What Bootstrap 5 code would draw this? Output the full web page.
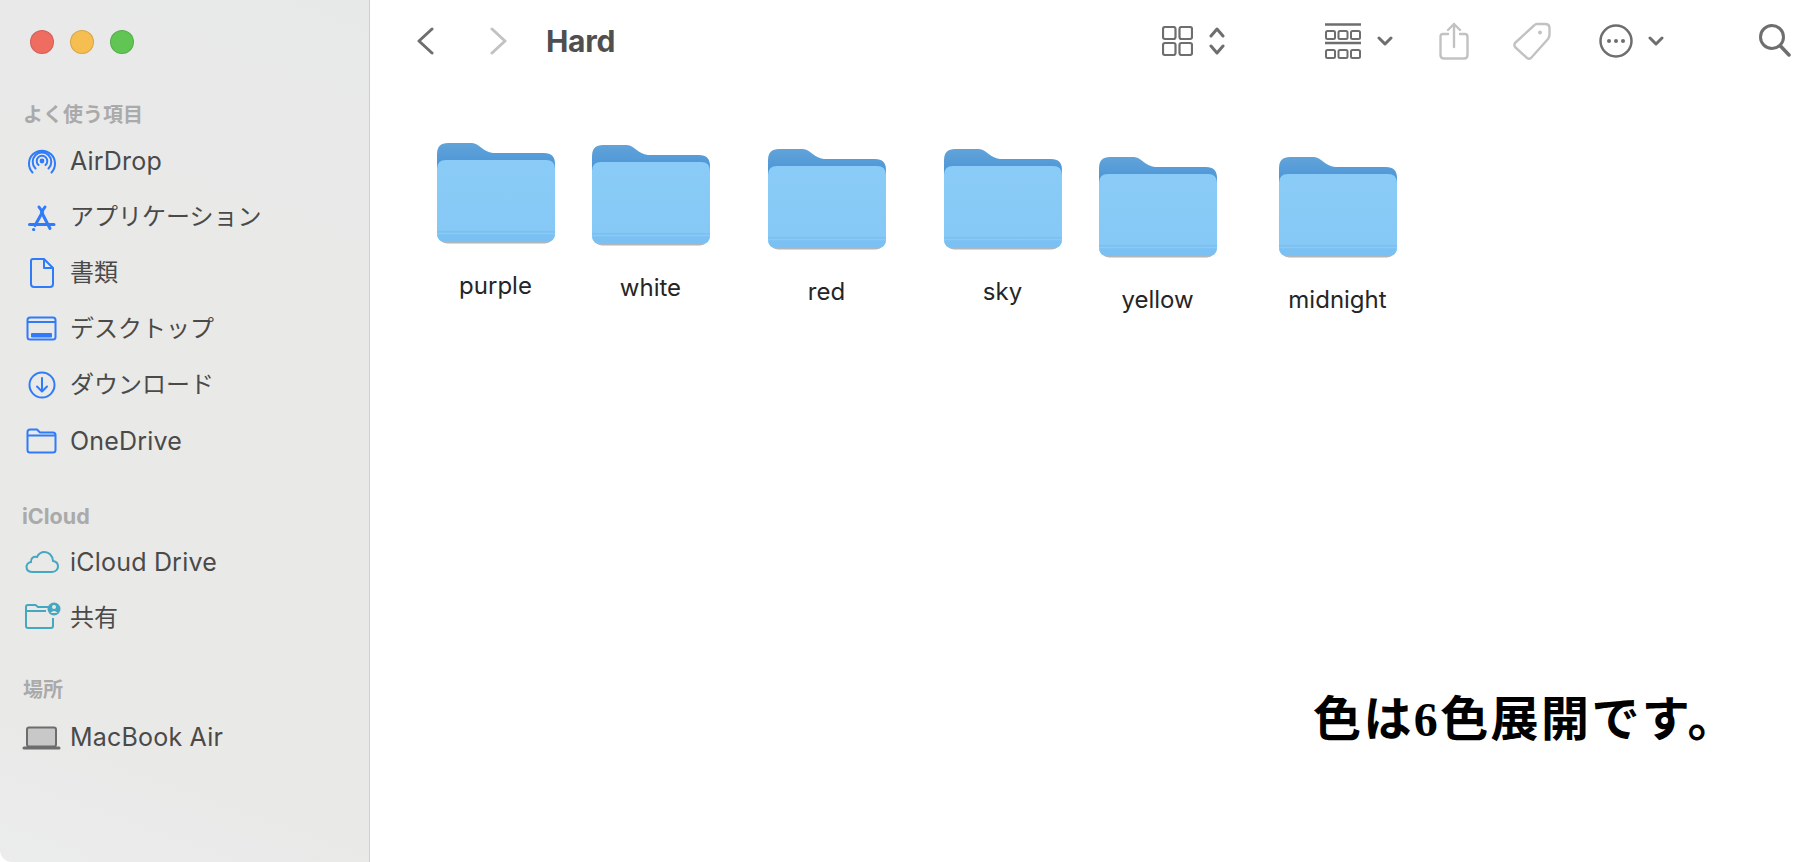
<!DOCTYPE html>
<html lang="ja">
<head>
<meta charset="utf-8">
<title>Hard</title>
<link href="https://cdn.jsdelivr.net/npm/bootstrap@5.3.0/dist/css/bootstrap.min.css" rel="stylesheet">
<style>
html,body{height:100%;margin:0;overflow:hidden;background:#fff}
body{font-family:Inter,"Noto Sans CJK JP","Noto Sans",sans-serif}
.win{width:1820px;height:862px;overflow:hidden;position:relative}
.side{width:370px;height:862px;flex:none;background:linear-gradient(200deg,#e7e9e9 0%,#e9e9e8 25%,#e9e9e8 85%,#ebecec 100%);border-right:1px solid #cfcfcf;border-bottom-left-radius:12px;padding-top:30px}
.lights{height:24px;padding-left:30px;gap:16px}
.dot{width:24px;height:24px;border-radius:50%;border:1px solid rgba(0,0,0,.13)}
.d-red{background:#ef6c60}.d-yel{background:#f6bd50}.d-grn{background:#61c554}
.sec{height:28px;line-height:28px;font-size:20px;font-weight:700;color:#aaa;padding-left:23px;margin-bottom:5px}
.sec-lat{font-size:21.500px;padding-left:22px}
.sec-a{margin-top:47px;margin-bottom:4px}.sec-b{margin-top:33px;margin-bottom:4px}.sec-c{margin-top:30px}
.row-side{height:56px;font-size:24px;color:#4a4a4a}
.lat{font-size:25px;letter-spacing:.2px;padding-top:1px}
.ico-side{width:44px;height:40px;margin-left:20px;margin-right:6px;flex:none}
.main-pane{min-width:0}
.bar{height:81px;padding-left:47px}
.bar svg{flex:none;display:block}
.ttl{font-size:30px;font-weight:700;color:#4f4f4f;line-height:1;margin-left:39px;margin-right:auto;letter-spacing:-.3px;padding-top:1px}
.ml-fwd{margin-left:56px}
.ml-upd{margin-left:16px}.ml-grp{margin-left:100px}.ml-chev{margin-left:16px}.ml-chev2{margin-left:15px}
.ml-shr{margin-left:46px}.ml-tag{margin-left:44px}.ml-more{margin-left:48px}
.ml-srch{margin-left:95px;margin-right:29px}
.canvas{position:absolute;left:370px;top:0;right:0;bottom:0;pointer-events:none}
.fitem{position:absolute;width:118px;display:flex;flex-direction:column;align-items:center}
.fitem svg{display:block;flex:none;overflow:visible}
.fname{font-size:24px;line-height:28px;color:#252525;margin-top:28px;white-space:nowrap;margin-left:-1px}
.f1{left:67px;top:143px}.f2{left:222px;top:145px}.f3{left:398px;top:149px}
.f4{left:574px;top:149px}.f5{left:729px;top:157px}.f6{left:909px;top:157px}
.note{position:absolute;left:943px;top:688px;font-family:"Liberation Serif","Noto Sans CJK JP",serif;font-weight:700;font-size:48px;line-height:64px;color:#000;white-space:nowrap;letter-spacing:2.400px}
</style>
</head>
<body>
<svg width="0" height="0" class="position-absolute">
<defs>
<linearGradient id="gb" x1="0" y1="0" x2="0" y2="1"><stop offset="0" stop-color="#62a3d9"/><stop offset="1" stop-color="#3b8cd6"/></linearGradient>
<linearGradient id="gf" x1="0" y1="0" x2="0" y2="1"><stop offset="0" stop-color="#8accf7"/><stop offset="1" stop-color="#85c8f6"/></linearGradient>
<symbol id="fold" viewBox="0 0 118 101">
<rect x="1" y="60" width="116" height="40.500" rx="9" fill="#7c8790" opacity=".6"/>
<path d="M0 11Q0 0 11 0H35C42 0 46 9 56 10H107Q118 10 118 21V40H0Z" fill="url(#gb)"/>
<path d="M0 26Q0 17 9 17H109Q118 17 118 26V90Q118 99 109 99H9Q0 99 0 90Z" fill="url(#gf)"/>
<path d="M0 88H118V90Q118 99 109 99H9Q0 99 0 90Z" fill="#7bc0f2"/>
<path d="M0 90.500H118" stroke="#8ccaf5" stroke-width="1.500"/>
</symbol>
</defs>
</svg>
<div class="win d-flex">
  <aside class="side">
    <div class="lights d-flex"><span class="dot d-red"></span><span class="dot d-yel"></span><span class="dot d-grn"></span></div>
    <div class="sec sec-a">よく使う項目</div>
    <div class="row-side d-flex align-items-center">
      <svg class="ico-side" viewBox="0 0 44 40" fill="none" stroke="#2f7bfa" stroke-width="2" stroke-linecap="round"><circle cx="22" cy="20" r="2.400" fill="#2f7bfa" stroke="none"/><path d="M18.500 24A5.300 5.300 0 1 1 25.500 24M15.500 27.500A9.300 9.300 0 1 1 28.500 27.500M12.500 31.500A13 13 0 1 1 31.500 31.500"/></svg>
      <span class="lat">AirDrop</span>
    </div>
    <div class="row-side d-flex align-items-center">
      <svg class="ico-side" viewBox="0 0 44 40" fill="none" stroke="#2f7bfa" stroke-width="3" stroke-linecap="round"><path d="M19 10L22.500 15L15 28.500M25 10L21.500 15L30 31.500M9.500 27.500H34M13.500 32.500H13.800"/></svg>
      <span>アプリケーション</span>
    </div>
    <div class="row-side d-flex align-items-center">
      <svg class="ico-side" viewBox="0 0 44 40" fill="none" stroke="#2f7bfa" stroke-width="2" stroke-linejoin="round"><path d="M13 6H24L33 15V31Q33 34 30 34H14Q11 34 11 31V8Q11 6 13 6ZM24 6V15H33"/></svg>
      <span>書類</span>
    </div>
    <div class="row-side d-flex align-items-center">
      <svg class="ico-side" viewBox="0 0 44 40" fill="none" stroke="#2f7bfa" stroke-width="2"><rect x="7.500" y="8.500" width="28" height="22" rx="2.500"/><path d="M7.500 13H35.500"/><rect x="11" y="24" width="21" height="4.500" rx="1" fill="#2f7bfa" stroke="none"/></svg>
      <span>デスクトップ</span>
    </div>
    <div class="row-side d-flex align-items-center">
      <svg class="ico-side" viewBox="0 0 44 40" fill="none" stroke="#2f7bfa" stroke-width="2" stroke-linecap="round" stroke-linejoin="round"><circle cx="22" cy="20" r="12.500"/><path d="M22 13V26M17 21.500L22 26.500L27 21.500"/></svg>
      <span>ダウンロード</span>
    </div>
    <div class="row-side d-flex align-items-center">
      <svg class="ico-side" viewBox="0 0 44 40" fill="none" stroke="#2f7bfa" stroke-width="2" stroke-linejoin="round"><path d="M7.500 11Q7.500 8.500 10 8.500H17L20 11.500H33Q35.500 11.500 35.500 14V29Q35.500 31.500 33 31.500H10Q7.500 31.500 7.500 29ZM7.500 14.500H35.500"/></svg>
      <span class="lat">OneDrive</span>
    </div>
    <div class="sec sec-lat sec-b">iCloud</div>
    <div class="row-side d-flex align-items-center">
      <svg class="ico-side" viewBox="0 0 44 40" fill="none" stroke="#45a7c0" stroke-width="2"><path d="M13 30H32C36 30 38 27 38 24.500C38 21.500 36 19.500 33 19C32.500 13 28.500 10 24.500 10C21 10 18.500 12 17 15C13 14 10.500 17 11 20C8 20.500 6.500 23 6.500 25C6.500 28 9 30 13 30Z"/></svg>
      <span class="lat">iCloud Drive</span>
    </div>
    <div class="row-side d-flex align-items-center">
      <svg class="ico-side" viewBox="0 0 44 40" fill="none" stroke="#45a7c0" stroke-width="2" stroke-linejoin="round"><path d="M30 9H18L15.500 7H8Q6 7 6 9V28Q6 30 8 30H31Q33 30 33 28V20M6 13H26"/><circle cx="34" cy="11" r="6.500" fill="#45a7c0" stroke="none"/><circle cx="34" cy="9" r="2" fill="#e9e9e8" stroke="none"/><path d="M30.500 15Q34 11 37.500 15Z" fill="#e9e9e8" stroke="none"/></svg>
      <span>共有</span>
    </div>
    <div class="sec sec-c">場所</div>
    <div class="row-side d-flex align-items-center">
      <svg class="ico-side" viewBox="0 0 44 40" fill="none"><rect x="7" y="10.500" width="29" height="19" rx="2" fill="#c8c8c8" stroke="#6d6d6d" stroke-width="2"/><path d="M4 31H39" stroke="#6d6d6d" stroke-width="3" stroke-linecap="round"/></svg>
      <span class="lat">MacBook Air</span>
    </div>
  </aside>
  <main class="main-pane flex-grow-1">
    <div class="bar d-flex align-items-center">
      <svg width="17" height="28" viewBox="0 0 17 28" fill="none" stroke="#6e6e6e" stroke-width="3" stroke-linecap="round" stroke-linejoin="round"><path d="M15 2L2 14L15 26"/></svg>
      <svg class="ml-fwd" width="17" height="28" viewBox="0 0 17 28" fill="none" stroke="#c2c2c2" stroke-width="3" stroke-linecap="round" stroke-linejoin="round"><path d="M2 2L15 14L2 26"/></svg>
      <div class="ttl">Hard</div>
      <svg width="31" height="30" viewBox="0 0 31 30" fill="none" stroke="#6e6e6e" stroke-width="2.200"><rect x="1" y="1" width="12.500" height="12" rx="2"/><rect x="17.500" y="1" width="12.500" height="12" rx="2"/><rect x="1" y="17" width="12.500" height="12" rx="2"/><rect x="17.500" y="17" width="12.500" height="12" rx="2"/></svg>
      <svg class="ml-upd" width="16" height="28" viewBox="0 0 16 28" fill="none" stroke="#6e6e6e" stroke-width="3" stroke-linecap="round" stroke-linejoin="round"><path d="M2 9L8 2L14 9M2 19L8 26L14 19"/></svg>
      <svg class="ml-grp" width="36" height="36" viewBox="0 0 36 36" fill="none" stroke="#6e6e6e"><path d="M0 1.500H36M0 20H36" stroke-width="2.500"/><g stroke-width="2"><rect x="1" y="8" width="9" height="8" rx="1.500"/><rect x="13.500" y="8" width="9" height="8" rx="1.500"/><rect x="26" y="8" width="9" height="8" rx="1.500"/><rect x="1" y="27" width="9" height="8" rx="1.500"/><rect x="13.500" y="27" width="9" height="8" rx="1.500"/><rect x="26" y="27" width="9" height="8" rx="1.500"/></g></svg>
      <svg class="ml-chev" width="16" height="10" viewBox="0 0 16 10" fill="none" stroke="#6e6e6e" stroke-width="3" stroke-linecap="round" stroke-linejoin="round"><path d="M2 2L8 8L14 2"/></svg>
      <svg class="ml-shr" width="30" height="38" viewBox="0 0 30 38" fill="none" stroke="#c2c2c2" stroke-width="2.400" stroke-linecap="round" stroke-linejoin="round"><path d="M9 12H4Q1.500 12 1.500 15V33Q1.500 36.500 5 36.500H25Q28.500 36.500 28.500 33V15Q28.500 12 26 12H21M15 25V2M9 8L15 2L21 8"/></svg>
      <svg class="ml-tag" width="38" height="38" viewBox="0 0 38 38" fill="none" stroke="#c2c2c2" stroke-width="2.400" stroke-linejoin="round"><path d="M24 2H32Q36.500 2 36.500 6V13Q36.500 15 35 17L18 36Q16 37.500 14 36L2 25Q0.800 23 2 21L21 3.500Q22.500 2 24 2Z"/><circle cx="27" cy="10.500" r="2" fill="#c2c2c2" stroke="none"/></svg>
      <svg class="ml-more" width="34" height="34" viewBox="0 0 34 34" fill="none" stroke="#6e6e6e" stroke-width="2.500"><circle cx="17" cy="17" r="15.500"/><g fill="#6e6e6e" stroke="none"><circle cx="10" cy="17" r="2"/><circle cx="17" cy="17" r="2"/><circle cx="24" cy="17" r="2"/></g></svg>
      <svg class="ml-chev2" width="16" height="10" viewBox="0 0 16 10" fill="none" stroke="#6e6e6e" stroke-width="3" stroke-linecap="round" stroke-linejoin="round"><path d="M2 2L8 8L14 2"/></svg>
      <svg class="ml-srch" width="32" height="33" viewBox="0 0 32 33" fill="none" stroke="#6e6e6e" stroke-linecap="round"><circle cx="13" cy="13" r="11.500" stroke-width="3"/><path d="M21.500 22L30 31" stroke-width="3.500"/></svg>
    </div>
  </main>
  <div class="canvas">
    <div class="fitem f1"><svg width="118" height="101"><use href="#fold"/></svg><div class="fname">purple</div></div>
    <div class="fitem f2"><svg width="118" height="101"><use href="#fold"/></svg><div class="fname">white</div></div>
    <div class="fitem f3"><svg width="118" height="101"><use href="#fold"/></svg><div class="fname">red</div></div>
    <div class="fitem f4"><svg width="118" height="101"><use href="#fold"/></svg><div class="fname">sky</div></div>
    <div class="fitem f5"><svg width="118" height="101"><use href="#fold"/></svg><div class="fname">yellow</div></div>
    <div class="fitem f6"><svg width="118" height="101"><use href="#fold"/></svg><div class="fname">midnight</div></div>
    <div class="note">色は6色展開です。</div>
  </div>
</div>
<script src="https://cdn.jsdelivr.net/npm/bootstrap@5.3.0/dist/js/bootstrap.bundle.min.js"></script>
</body>
</html>
